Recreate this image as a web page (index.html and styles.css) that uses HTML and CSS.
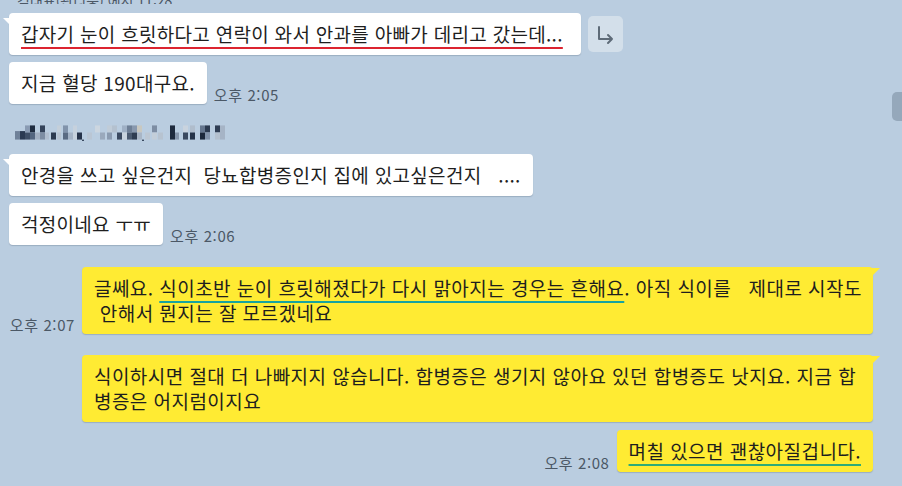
FILE: index.html
```html
<!DOCTYPE html>
<html lang="ko">
<head>
	<meta charset="UTF-8">
	<title>채팅</title>
	<link rel="stylesheet" href="styles.css">
</head>
<body>
	<div class="page">
		<div class="chat">
			<div class="cut"><span>김대표(관리중) 에서 11:28</span></div>

			<div class="row in r1">
				<div class="bubble white tail long"><span class="ul red">갑자기 눈이 흐릿하다고 연락이 와서 안과를 아빠가 데리고 갔는데...</span></div>
				<button class="share" type="button">
					<svg width="35" height="36" viewBox="0 0 35 36">
						<path d="M11 11 V23 H24 M20 19 L24 23 L20 27" fill="none" stroke="#5e6b78" stroke-width="2" stroke-linecap="round" stroke-linejoin="round"/>
					</svg>
				</button>
			</div>

			<div class="row in r2">
				<div class="bubble white">지금 혈당 190대구요.</div>
				<span class="time">오후 2:05</span>
			</div>

			<div class="name">
				<svg width="214" height="17" viewBox="0 0 214 12" preserveAspectRatio="none">
					<rect x="0" y="5" width="5" height="6" fill="#6f8199"/>
					<rect x="5" y="5" width="5" height="6" fill="#2b3a52"/>
					<rect x="10" y="1" width="5" height="5" fill="#8a9bb3"/>
					<rect x="10" y="6" width="5" height="5" fill="#3e4e66"/>
					<rect x="15" y="1" width="5" height="5" fill="#1f2c40"/>
					<rect x="15" y="6" width="5" height="5" fill="#546680"/>
					<rect x="20" y="6" width="5" height="5" fill="#a3b1c4"/>
					<rect x="25" y="1" width="5" height="5" fill="#34435a"/>
					<rect x="25" y="6" width="5" height="5" fill="#7e8ea4"/>
					<rect x="30" y="6" width="4" height="5" fill="#b1bfd0"/>
					<rect x="36" y="6" width="5" height="5" fill="#2c3a50"/>
					<rect x="42" y="1" width="4" height="5" fill="#c4cfda"/>
					<rect x="42" y="6" width="4" height="5" fill="#b8c4d2"/>
					<rect x="48" y="1" width="5" height="5" fill="#8193ab"/>
					<rect x="48" y="6" width="5" height="5" fill="#5a6b83"/>
					<rect x="53" y="6" width="5" height="5" fill="#a4b3c6"/>
					<rect x="58" y="1" width="4" height="10" fill="#c6d1dd"/>
					<rect x="62" y="6" width="5" height="5" fill="#26334a"/>
					<rect x="67" y="11" width="2" height="1" fill="#3a4a60"/>
					<rect x="72" y="6" width="5" height="5" fill="#bac6d4"/>
					<rect x="80" y="1" width="5" height="5" fill="#ccd6e0"/>
					<rect x="85" y="6" width="5" height="5" fill="#9aa9bc"/>
					<rect x="92" y="1" width="5" height="5" fill="#c0ccd8"/>
					<rect x="92" y="6" width="5" height="5" fill="#8b9bb0"/>
					<rect x="97" y="1" width="5" height="5" fill="#b4c1cf"/>
					<rect x="102" y="6" width="5" height="5" fill="#3b4a61"/>
					<rect x="107" y="1" width="5" height="5" fill="#9fb0c5"/>
					<rect x="107" y="6" width="5" height="5" fill="#c8d3de"/>
					<rect x="112" y="1" width="5" height="5" fill="#6e7f96"/>
					<rect x="112" y="6" width="5" height="5" fill="#4a5a70"/>
					<rect x="117" y="1" width="5" height="5" fill="#8898ae"/>
					<rect x="117" y="6" width="5" height="5" fill="#2f3d52"/>
					<rect x="122" y="1" width="5" height="5" fill="#c9c8c0"/>
					<rect x="122" y="6" width="5" height="5" fill="#a9b6c6"/>
					<rect x="127" y="11" width="2" height="1" fill="#3a4a60"/>
					<rect x="130" y="6" width="5" height="5" fill="#bcc7d3"/>
					<rect x="137" y="1" width="5" height="5" fill="#7d8da3"/>
					<rect x="137" y="6" width="5" height="5" fill="#c3ced9"/>
					<rect x="143" y="6" width="5" height="5" fill="#b7c3d0"/>
					<rect x="155" y="1" width="5" height="10" fill="#1e2a3d"/>
					<rect x="160" y="6" width="4" height="5" fill="#8696ac"/>
					<rect x="168" y="1" width="5" height="5" fill="#c9d3de"/>
					<rect x="168" y="6" width="5" height="5" fill="#3b4a60"/>
					<rect x="175" y="1" width="5" height="5" fill="#b0bdcc"/>
					<rect x="175" y="6" width="5" height="5" fill="#263449"/>
					<rect x="185" y="1" width="5" height="5" fill="#66778f"/>
					<rect x="185" y="6" width="5" height="5" fill="#1c283b"/>
					<rect x="190" y="1" width="5" height="5" fill="#2c3a50"/>
					<rect x="190" y="6" width="5" height="5" fill="#8393aa"/>
					<rect x="200" y="1" width="5" height="5" fill="#303e54"/>
					<rect x="200" y="6" width="5" height="5" fill="#b4c0ce"/>
					<rect x="205" y="1" width="5" height="10" fill="#a6b4c6"/>
				</svg>
			</div>

			<div class="row in r3">
				<div class="bubble white tail">안경을 쓰고 싶은건지  당뇨합병증인지 집에 있고싶은건지   ....</div>
			</div>

			<div class="row in r4">
				<div class="bubble white">걱정이네요 ㅜㅠ</div>
				<span class="time">오후 2:06</span>
			</div>

			<div class="row out r5">
				<span class="time">오후 2:07</span>
				<div class="bubble yellow tail wide">글쎄요. <span class="ul teal">식이초반 눈이 흐릿해졌다가 다시 맑아지는 경우는 흔해요</span>. 아직 식이를   제대로 시작도<br> 안해서 뭔지는 잘 모르겠네요</div>
			</div>

			<div class="row out r6">
				<div class="bubble yellow tail wide">식이하시면 절대 더 나빠지지 않습니다. 합병증은 생기지 않아요 있던 합병증도 낫지요. 지금 합<br>병증은 어지럼이지요</div>
			</div>

			<div class="row out r7">
				<span class="time">오후 2:08</span>
				<div class="bubble yellow"><span class="ul green">며칠 있으면 괜찮아질겁니다.</span></div>
			</div>
		</div>
		<div class="scroll"><div class="thumb"></div></div>
	</div>
</body>
</html>
```

FILE: styles.css
```css
*{
	margin:0;
	padding:0;
	box-sizing:border-box;
}
html,body{
	height:100%;
}
body{
	background:#bacde0;
	font-family:"Noto Sans CJK KR","Noto Sans",sans-serif;
	color:#1e1e1e;
	overflow:hidden;
}
.page{
	display:flex;
	height:100%;
}
.chat{
	flex:1;
	padding:0 19px 0 9px;
}
.scroll{
	width:10px;
	padding-top:92px;
}
.thumb{
	height:29px;
	background:#95a8bb;
	border-radius:5px 0 0 5px;
}

/* 잘린 윗줄 */
.cut{
	height:4px;
	overflow:hidden;
	display:flex;
	align-items:flex-end;
	padding-left:8px;
	font-size:14px;
	line-height:14px;
	color:#4c5866;
	margin-bottom:9px;
}
.cut span{
	display:block;
	margin-bottom:-3px;
}

.row{
	display:flex;
	align-items:flex-end;
	gap:7px;
}
.row.out{
	justify-content:flex-end;
}
.r1{ align-items:center; }
.r2,.r4{ margin-top:7px; }
.r3{ margin-top:13px; }
.r5{ margin-top:22px; }
.r6{ margin-top:21px; }
.r7{ margin-top:8px; }

.name{
	margin-top:20px;
	padding-left:6px;
	height:17px;
}
.name svg{
	display:block;
}

.bubble{
	position:relative;
	font-size:19px;
	letter-spacing:0.3px;
	line-height:25px;
	padding:8px 12px 9px;
	border-radius:4px;
	white-space:pre;
	box-shadow:0 1px 1px rgba(60,80,100,0.25);
}
.white{
	background:#fff;
}
.yellow{
	background:#ffeb33;
	letter-spacing:0.45px;
}
.long{
	padding-right:18px;
}
.wide{
	width:791px;
	padding:8px 11px 9px 12px;
}
.white.tail::before{
	content:"";
	position:absolute;
	left:-6px;
	top:5px;
	width:7px;
	height:7px;
	background:#fff;
	clip-path:polygon(0 0,100% 0,100% 100%);
}
.yellow.tail::before{
	content:"";
	position:absolute;
	right:-7px;
	top:1px;
	width:8px;
	height:8px;
	background:#ffeb33;
	clip-path:polygon(0 0,100% 0,0 100%);
}

.ul{
	text-decoration:underline;
	text-decoration-thickness:2px;
	text-underline-offset:5px;
	text-decoration-skip-ink:none;
}
.red{ text-decoration-color:#dc2430; }
.teal{ text-decoration-color:#17a3a0; }
.green{ text-decoration-color:#2eab78; }

.time{
	font-size:15px;
	letter-spacing:0.6px;
	line-height:16px;
	color:#4b5866;
	white-space:nowrap;
	margin-bottom:1px;
}

.share{
	width:35px;
	height:36px;
	border:0;
	border-radius:5px;
	background:#d3dfea;
	display:flex;
}
.share svg{
	display:block;
}
```
